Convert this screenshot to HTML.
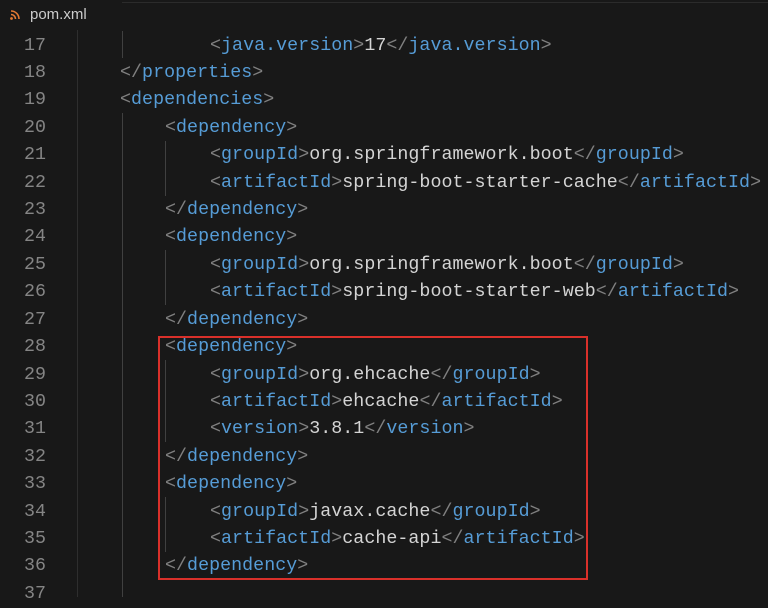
<!DOCTYPE html><html><head><style>
body{margin:0;width:768px;height:597px;background:#181818;overflow:hidden;position:relative;font-family:"Liberation Mono",monospace}
.tabbar{position:absolute;left:0;top:0;width:768px;height:30px;background:#181818}
.topline{position:absolute;left:122px;top:0;width:646px;height:2px;border-bottom:1px solid #2b2b2b}
.tab{position:absolute;left:10px;top:6px;font:15px "Liberation Sans",sans-serif;color:#cccccc}
.ln{position:absolute;left:0;width:46px;text-align:right;color:#858585;font-size:18.3px;line-height:27.42px}
.code{position:absolute;left:120px;white-space:pre;color:#d4d4d4;font-size:18.3px;line-height:27.42px;letter-spacing:0.05px}
.b{color:#808080}.t{color:#569cd6}
.g{position:absolute;width:1px;background:#404040}
</style></head><body>
<div class="tabbar"><div class="topline"></div>
<svg style="position:absolute;left:10px;top:10px" width="10" height="10" viewBox="0 0 10 10"><circle cx="1.5" cy="8.5" r="1.4" fill="#e37933"/><path d="M1 4.5a4.5 4.5 0 0 1 4.5 4.5M1 1a8 8 0 0 1 8 8" stroke="#e37933" stroke-width="1.6" fill="none"/></svg>
<div class="tab" style="left:30px">pom.xml</div></div>
<div class="g" style="left:77px;top:30px;height:567px;background:#2e2e2e"></div>
<div class="g" style="left:122px;top:31px;height:27px"></div>
<div class="g" style="left:122px;top:113px;height:484px"></div>
<div class="g" style="left:165px;top:141px;height:55px"></div>
<div class="g" style="left:165px;top:250px;height:55px"></div>
<div class="g" style="left:165px;top:360px;height:82px"></div>
<div class="g" style="left:165px;top:497px;height:55px"></div>
<div id="c"></div>
<div style="position:absolute;left:158px;top:336px;width:426px;height:240px;border:2px solid #d9302a"></div>
<script>
var L=[
[2,'<span class="b">&lt;</span><span class="t">java.version</span><span class="b">&gt;</span>17<span class="b">&lt;/</span><span class="t">java.version</span><span class="b">&gt;</span>'],
[0,'<span class="b">&lt;/</span><span class="t">properties</span><span class="b">&gt;</span>'],
[0,'<span class="b">&lt;</span><span class="t">dependencies</span><span class="b">&gt;</span>'],
[1,'o'],[2,'g|org.springframework.boot'],[2,'a|spring-boot-starter-cache'],[1,'c'],
[1,'o'],[2,'g|org.springframework.boot'],[2,'a|spring-boot-starter-web'],[1,'c'],
[1,'o'],[2,'g|org.ehcache'],[2,'a|ehcache'],[2,'v|3.8.1'],[1,'c'],
[1,'o'],[2,'g|javax.cache'],[2,'a|cache-api'],[1,'c'],[0,'']];
function el(n,v){return '<span class="b">&lt;</span><span class="t">'+n+'</span><span class="b">&gt;</span>'+v+'<span class="b">&lt;/</span><span class="t">'+n+'</span><span class="b">&gt;</span>'}
var h='';
L.forEach(function(l,i){var top=32.5+i*27.42;var s=l[1];
if(s=='o')s='<span class="b">&lt;</span><span class="t">dependency</span><span class="b">&gt;</span>';
else if(s=='c')s='<span class="b">&lt;/</span><span class="t">dependency</span><span class="b">&gt;</span>';
else if(s.indexOf('|')==1){var p=s.split('|');s=el({g:'groupId',a:'artifactId',v:'version'}[p[0]],p[1]);}
h+='<div class="ln" style="top:'+top+'px">'+(17+i)+'</div><div class="code" style="top:'+top+'px;left:'+(120+l[0]*45)+'px">'+s+'</div>';});
document.getElementById('c').innerHTML=h;
</script>
</body></html>
